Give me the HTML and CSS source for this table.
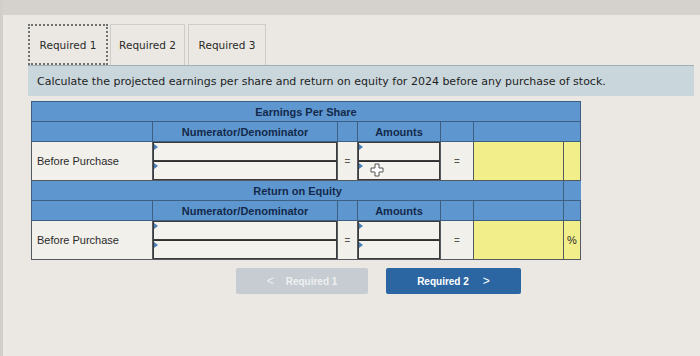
FILE: index.html
```html
<!DOCTYPE html>
<html>
<head>
<meta charset="utf-8">
<link rel="stylesheet" href="styles.css">
</head>
<body>
<div class="topband"></div>
<div class="page">
  <div class="tabs">
    <div class="tab tab-active">Required 1</div>
    <div class="tab">Required 2</div>
    <div class="tab">Required 3</div>
  </div>
  <div class="instr">Calculate the projected earnings per share and return on equity for 2024 before any purchase of stock.</div>
  <table class="grid">
    <colgroup>
      <col class="c-label"><col class="c-nd"><col class="c-eq"><col class="c-amt"><col class="c-eq2"><col class="c-res"><col class="c-unit">
    </colgroup>
    <tr class="title-row">
      <th colspan="7">Earnings Per Share</th>
    </tr>
    <tr class="head-row">
      <th></th><th>Numerator/Denominator</th><th></th><th>Amounts</th><th></th><th colspan="2"></th>
    </tr>
    <tr class="data-row">
      <td class="label">Before Purchase</td>
      <td class="inputs"><div class="box"></div><div class="box"></div></td>
      <td class="eq">=</td>
      <td class="inputs"><div class="box"></div><div class="box"><svg class="cursor" width="14" height="14" viewBox="0 0 14 14"><path d="M5 1h4v4h4v4H9v4H5V9H1V5h4z" fill="#fff" stroke="#555" stroke-width="1"/></svg></div></td>
      <td class="eq">=</td>
      <td class="res"></td>
      <td class="unit"></td>
    </tr>
    <tr class="title-row">
      <th colspan="6">Return on Equity</th><th></th>
    </tr>
    <tr class="head-row">
      <th></th><th>Numerator/Denominator</th><th></th><th>Amounts</th><th></th><th></th><th></th>
    </tr>
    <tr class="data-row">
      <td class="label">Before Purchase</td>
      <td class="inputs"><div class="box"></div><div class="box"></div></td>
      <td class="eq">=</td>
      <td class="inputs"><div class="box"></div><div class="box"></div></td>
      <td class="eq">=</td>
      <td class="res"></td>
      <td class="unit">%</td>
    </tr>
  </table>
  <div class="nav">
    <button class="btn btn-prev"><span class="chev">&lt;</span>Required 1</button>
    <button class="btn btn-next">Required 2<span class="chev chev-r">&gt;</span></button>
  </div>
</div>
</body>
</html>
```
FILE: styles.css
```css
html, body {
  margin: 0;
  padding: 0;
}
body {
  width: 700px;
  height: 356px;
  overflow: hidden;
  background: #ebe8e3;
  font-family: "Liberation Sans", Arial, sans-serif;
  border-left: 3px solid #d2cfca;
  box-sizing: border-box;
}
.topband {
  height: 15px;
  background: #d5d2cd;
}
.page {
  padding-left: 25px;
}
.tabs {
  display: flex;
  gap: 2px;
  margin-top: 9px;
  height: 41px;
}
.tab {
  box-sizing: border-box;
  height: 41px;
  padding: 0;
  white-space: nowrap;
  display: flex;
  align-items: center;
  justify-content: center;
  font-family: "DejaVu Sans", Verdana, sans-serif;
  font-size: 10.5px;
  color: #2a2a2a;
  border: 1px solid #cfccc7;
  border-bottom: none;
  background: #ebe8e3;
}
.tab:nth-child(2) { width: 75px; }
.tab:nth-child(3) { width: 78px; margin-left: 1px; }
.tab-active {
  width: 80px;
  border: 2px dotted #6f7070;
}
.instr {
  box-sizing: border-box;
  height: 31px;
  width: 666px;
  border-top: 1px solid #9fb0b8;
  background: #c9d6db;
  padding-left: 9px;
  display: flex;
  align-items: center;
  font-family: "DejaVu Sans", Verdana, sans-serif;
  font-size: 11px;
  color: #1e1e1e;
}
.grid {
  margin-top: 5px;
  margin-left: 3px;
  border-collapse: collapse;
  table-layout: fixed;
  width: 549px;
}
.c-label { width: 121px; }
.c-nd { width: 185px; }
.c-eq { width: 20px; }
.c-amt { width: 83px; }
.c-eq2 { width: 33px; }
.c-res { width: 90px; }
.c-unit { width: 17px; }
.grid th {
  background: #5e97cf;
  color: #13294b;
  font-size: 11px;
  font-weight: bold;
  padding: 0;
  border: 1px solid #3d5f82;
  text-align: center;
}
.title-row th {
  height: 19px;
  border-left: none;
  border-right: none;
}
.title-row th:last-child { border-left: 1px solid #3d5f82; }
.title-row th[colspan="7"] { border-left: 1px solid #3d5f82; border-right: 1px solid #3d5f82; }
.title-row th:first-child { border-left: 1px solid #3d5f82; }
.head-row th {
  height: 19px;
  border-top: 1px solid #45607e;
}
.head-row th:first-child { border-right: 1px solid #3d5f82; }
.data-row td {
  height: 38px;
  padding: 0;
  border: 1px solid #555a60;
  background: #f2f0eb;
  font-size: 11px;
  color: #2a2a2a;
}
.data-row .label {
  padding-left: 5px;
}
.data-row .inputs {
  vertical-align: top;
}
.box {
  position: relative;
  box-sizing: border-box;
  height: 19px;
  background: #f4f2ed;
  border: 1px solid #3b3b3b;
}
.box + .box {
  border-top: 1px solid #2f2f2f;
}
.box::before {
  content: "";
  position: absolute;
  left: 0;
  top: 1px;
  border-left: 4px solid #4a7fb5;
  border-top: 3px solid transparent;
  border-bottom: 3px solid transparent;
}
.cursor {
  position: absolute;
  left: 11px;
  top: 1px;
}
.eq {
  text-align: center;
  font-size: 10px !important;
  color: #555 !important;
}
.data-row .res {
  background: #f2ef8a;
}
.data-row .unit {
  background: #f2ef8a;
  text-align: center;
  font-size: 11px;
}
.nav {
  display: flex;
  gap: 18px;
  margin-top: 8px;
  padding-left: 208px;
}
.btn {
  box-sizing: border-box;
  height: 26px;
  border: none;
  border-radius: 2px;
  font-family: "Liberation Sans", Arial, sans-serif;
  font-size: 10px;
  font-weight: bold;
  display: flex;
  align-items: center;
  justify-content: center;
  gap: 12px;
  padding: 0;
}
.btn-prev {
  width: 132px;
  background: #c6ccd1;
  color: #eef0f2;
}
.btn-next {
  width: 135px;
  background: #2c66a2;
  color: #ffffff;
}
.chev {
  font-weight: normal;
  font-size: 12px;
}
.chev-r { margin-left: 2px; }
```
